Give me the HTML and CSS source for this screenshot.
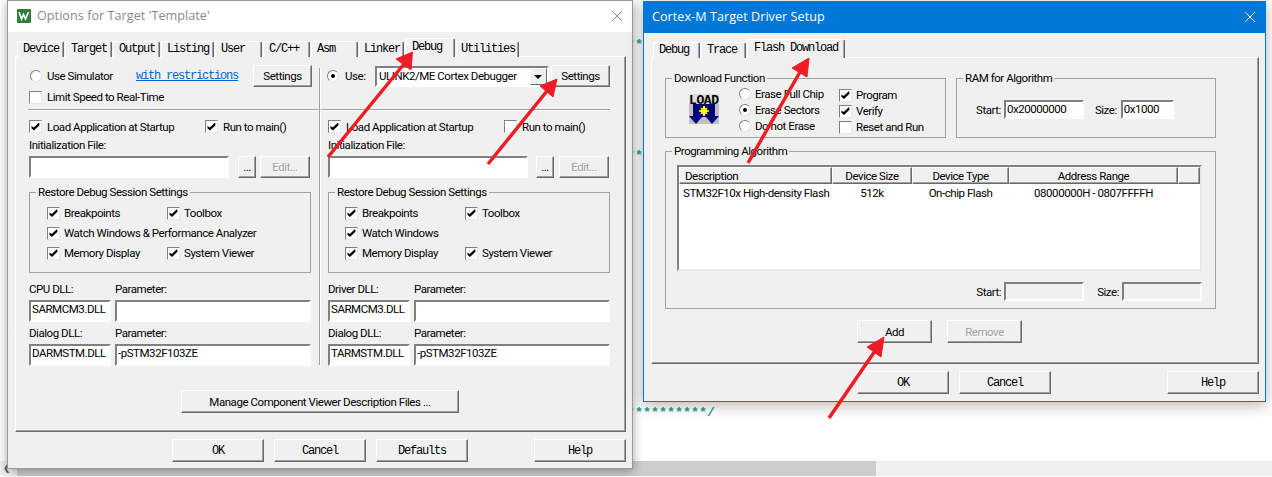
FILE: index.html
```html
<!DOCTYPE html>
<html lang="en">
<head>
<meta charset="utf-8">
<title>Options for Target</title>
<link rel="stylesheet" href="styles.css">
</head>
<body>
<div class="desktop">
  <div class="editor">
    <div class="code code-a">***</div>
    <div class="code code-b">***</div>
    <div class="code code-c">**********/</div>
  </div>
  <div class="hscroll">
    <div class="hscroll-arrow">&#10094;</div>
    <div class="hscroll-thumb"></div>
  </div>

  <section class="win win-options">
    <header class="title">
      <svg class="app-icon" viewBox="0 0 14 14" width="14" height="14"><rect width="14" height="14" rx="1" fill="#2f7d3b"/><path d="M2 3l2.5 7 2-4.500 2 4.500 3-7" fill="none" stroke="#fff" stroke-width="1.600"/></svg>
      <span class="title-text">Options for Target 'Template'</span>
      <svg class="close" viewBox="0 0 10 10" width="10" height="10"><path d="M0 0l10 10M10 0L0 10" stroke="#8a8a8a" stroke-width="1"/></svg>
    </header>
    <div class="body">
      <nav class="tabs tabs-options">
        <div class="tab">Device</div>
        <div class="tab">Target</div>
        <div class="tab">Output</div>
        <div class="tab t-listing">Listing</div>
        <div class="tab">User</div>
        <div class="tab">C/C++</div>
        <div class="tab">Asm</div>
        <div class="tab t-linker">Linker</div>
        <div class="tab active t-debug">Debug</div>
        <div class="tab t-utilities">Utilities</div>
      </nav>
      <div class="panel panel-options">
        <div class="panes">
          <div class="pane pane-left">
            <div class="row-top">
              <span class="radio"></span>
              <span class="use-sim">Use Simulator</span>
              <span class="link">with restrictions</span>
              <button class="btn btn-settings">Settings</button>
            </div>
            <label class="chk row-limit"><span class="box"></span>Limit Speed to Real-Time</label>
            <div class="rule"></div>
            <div class="row-load">
              <label class="chk load-chk"><span class="box on"></span>Load Application at Startup</label>
              <label class="chk"><span class="box on"></span>Run to main()</label>
            </div>
            <div class="lbl init-lbl">Initialization File:</div>
            <div class="row-init">
              <div class="field f-init"></div>
              <button class="btn btn-dots">...</button>
              <button class="btn btn-edit off">Edit...</button>
            </div>
            <fieldset class="group g-restore">
              <legend>Restore Debug Session Settings</legend>
              <div class="restore-grid">
                <label class="chk"><span class="box on"></span>Breakpoints</label>
                <label class="chk"><span class="box on"></span>Toolbox</label>
                <label class="chk span2"><span class="box on"></span>Watch Windows &amp; Performance Analyzer</label>
                <label class="chk"><span class="box on"></span>Memory Display</label>
                <label class="chk"><span class="box on"></span>System Viewer</label>
              </div>
            </fieldset>
            <div class="dll-grid">
              <div class="lbl">CPU DLL:</div><div class="lbl">Parameter:</div>
              <div class="field">SARMCM3.DLL</div><div class="field"></div>
              <div class="lbl">Dialog DLL:</div><div class="lbl">Parameter:</div>
              <div class="field">DARMSTM.DLL</div><div class="field">-pSTM32F103ZE</div>
            </div>
          </div>
          <div class="vline"></div>
          <div class="pane pane-right">
            <div class="row-top">
              <span class="radio on"></span>
              <span class="use-lbl">Use:</span>
              <div class="combo"><span class="combo-text">ULINK2/ME Cortex Debugger</span><span class="combo-btn"></span></div>
              <button class="btn btn-settings">Settings</button>
            </div>
            <div class="row-limit"></div>
            <div class="rule"></div>
            <div class="row-load">
              <label class="chk load-chk"><span class="box on"></span>Load Application at Startup</label>
              <label class="chk"><span class="box"></span>Run to main()</label>
            </div>
            <div class="lbl init-lbl">Initialization File:</div>
            <div class="row-init">
              <div class="field f-init"></div>
              <button class="btn btn-dots">...</button>
              <button class="btn btn-edit off">Edit...</button>
            </div>
            <fieldset class="group g-restore">
              <legend>Restore Debug Session Settings</legend>
              <div class="restore-grid">
                <label class="chk"><span class="box on"></span>Breakpoints</label>
                <label class="chk"><span class="box on"></span>Toolbox</label>
                <label class="chk span2"><span class="box on"></span>Watch Windows</label>
                <label class="chk"><span class="box on"></span>Memory Display</label>
                <label class="chk"><span class="box on"></span>System Viewer</label>
              </div>
            </fieldset>
            <div class="dll-grid">
              <div class="lbl">Driver DLL:</div><div class="lbl">Parameter:</div>
              <div class="field">SARMCM3.DLL</div><div class="field"></div>
              <div class="lbl">Dialog DLL:</div><div class="lbl">Parameter:</div>
              <div class="field">TARMSTM.DLL</div><div class="field">-pSTM32F103ZE</div>
            </div>
          </div>
        </div>
        <button class="btn btn-manage">Manage Component Viewer Description Files ...</button>
      </div>
      <div class="actions actions-options">
        <button class="btn mono btn-action">OK</button>
        <button class="btn mono btn-action">Cancel</button>
        <button class="btn mono btn-action">Defaults</button>
        <button class="btn mono btn-action push">Help</button>
      </div>
    </div>
  </section>

  <section class="win win-driver">
    <header class="title title-blue">
      <span class="title-text">Cortex-M Target Driver Setup</span>
      <svg class="close" viewBox="0 0 10 10" width="10" height="10"><path d="M0 0l10 10M10 0L0 10" stroke="#fff" stroke-width="1"/></svg>
    </header>
    <div class="body body-driver">
      <nav class="tabs tabs-driver">
        <div class="tab">Debug</div>
        <div class="tab t-trace">Trace</div>
        <div class="tab active t-flash">Flash Download</div>
      </nav>
      <div class="panel panel-driver">
        <div class="top-groups">
          <fieldset class="group g-download">
            <legend>Download Function</legend>
            <div class="download">
              <svg class="load-icon" viewBox="0 0 30 30" width="30" height="30">
                <rect width="30" height="30" fill="#c0c0c0"/>
                <rect width="30" height="10" fill="#dcdcdc"/>
                <text x="15" y="9.500" text-anchor="middle" textLength="30" class="load-text">LOAD</text>
                <path d="M4 10h22v12h4l-7 8-6-7h-4l-6 7-7-8h4z" fill="#00007f"/>
                <path d="M14.200 12h1.600l.7 2.600 2.400-1.300-1.300 2.400 2.600.7v1.200l-2.600.7 1.300 2.400-2.400-1.300-.7 2.600h-1.600l-.7-2.600-2.400 1.300 1.300-2.400-2.600-.7v-1.200l2.600-.7-1.300-2.400 2.400 1.300z" fill="#ffff00"/>
              </svg>
              <div class="radios">
                <label class="chk"><span class="radio"></span>Erase Full Chip</label>
                <label class="chk"><span class="radio on"></span>Erase Sectors</label>
                <label class="chk"><span class="radio"></span>Do not Erase</label>
              </div>
              <div class="checks">
                <label class="chk"><span class="box on"></span>Program</label>
                <label class="chk"><span class="box on"></span>Verify</label>
                <label class="chk"><span class="box"></span>Reset and Run</label>
              </div>
            </div>
          </fieldset>
          <fieldset class="group g-ram">
            <legend>RAM for Algorithm</legend>
            <div class="ram">
              <span class="lbl">Start:</span>
              <div class="field f-start">0x20000000</div>
              <span class="lbl ram-size">Size:</span>
              <div class="field f-size">0x1000</div>
            </div>
          </fieldset>
        </div>
        <fieldset class="group g-prog">
          <legend>Programming Algorithm</legend>
          <div class="list">
            <div class="list-head">
              <div class="th th-left">Description</div>
              <div class="th">Device Size</div>
              <div class="th">Device Type</div>
              <div class="th">Address Range</div>
              <div class="th"></div>
            </div>
            <div class="list-row">
              <div class="td td-left">STM32F10x High-density Flash</div>
              <div class="td">512k</div>
              <div class="td">On-chip Flash</div>
              <div class="td">08000000H - 0807FFFFH</div>
            </div>
          </div>
          <div class="range">
            <span class="lbl">Start:</span>
            <div class="field f-range"></div>
            <span class="lbl range-size">Size:</span>
            <div class="field f-range"></div>
          </div>
        </fieldset>
        <div class="add-row">
          <button class="btn btn-add">Add</button>
          <button class="btn btn-add off">Remove</button>
        </div>
      </div>
      <div class="actions actions-driver">
        <button class="btn mono btn-action">OK</button>
        <button class="btn mono btn-action">Cancel</button>
        <button class="btn mono btn-action push">Help</button>
      </div>
    </div>
  </section>

  <svg class="arrows" viewBox="0 0 1272 477" width="1272" height="477">
    <g fill="#ee1c25" stroke="#ee1c25">
      <path d="M328 157L404 64" stroke-width="3.500"/>
      <path d="M412.500 52L396 59 411 70z" stroke-width="1"/>
      <path d="M488 164L547 91" stroke-width="3.500"/>
      <path d="M557 79L540 86 553 97z" stroke-width="1"/>
      <path d="M748 163L800 72" stroke-width="3.500"/>
      <path d="M809 58L792 68 807 77z" stroke-width="1"/>
      <path d="M829 418L875 351" stroke-width="3.500"/>
      <path d="M884 337L867 347 881 357z" stroke-width="1"/>
    </g>
  </svg>
</div>
</body>
</html>
```

FILE: styles.css
```css
* { box-sizing: border-box; }
html, body { margin: 0; padding: 0; }
body { background: #fff; font: 11.5px/14px Roboto, "Liberation Sans", sans-serif; letter-spacing: -0.45px; color: #000; overflow: hidden; }

.desktop { position: relative; width: 1272px; height: 477px; overflow: hidden; }

/* background editor */
.editor { height: 461px; padding: 37px 0 0 627px; font: bold 13.33px/16px "Liberation Mono", monospace; letter-spacing: 0; color: #2c9c86; }
.code { white-space: pre; height: 16px; }
.code-b { margin-top: 95px; }
.code-c { margin-top: 241px; }
.hscroll { display: flex; height: 15px; background: #f0f0f0; }
.hscroll-arrow { width: 17px; font: 9px/15px "DejaVu Sans", sans-serif; color: #505050; padding-left: 3px; }
.hscroll-thumb { width: 859px; background: #cdcdcd; }

/* windows */
.win { position: absolute; background: #f0f0f0; display: flex; flex-direction: column; }
.win-options { left: 7px; top: 0; width: 626px; height: 469px; border: 1px solid #9a9a9a; box-shadow: 0 2px 10px rgba(0,0,0,.35); z-index: 1; }
.win-driver { left: 643px; top: 1px; width: 623px; height: 401px; border: 1px solid #0078d7; box-shadow: 0 3px 14px rgba(0,0,0,.3); z-index: 2; }

.title { height: 31px; flex: none; display: flex; align-items: center; background: #fff; padding: 0 10px 2px 9px; }
.title-text { font: 12.6px/18px "Open Sans", sans-serif; letter-spacing: .05px; color: #8a8a8a; margin-left: 6px; }
.app-icon { flex: none; }
.close { margin-left: auto; }
.title-blue { background: #0078d7; padding: 0 10px 2px 2px; }
.title-blue .title-text { color: #fff; }

.body { flex: 1; padding: 0 7px; }

/* tabs */
.tabs { display: flex; align-items: flex-end; gap: 1px; height: 25px; padding-left: 2px; position: relative; z-index: 1; margin-bottom: -1px; }
.tab { width: 47px; height: 16px; font: 12px/15px "Liberation Mono", monospace; letter-spacing: -1.2px; padding-left: 5px; background: #f0f0f0; border-top: 1px solid #fff; border-left: 1px solid #fff; border-right: 1px solid #696969; box-shadow: inset -1px 0 #a0a0a0; border-radius: 2px 2px 0 0; white-space: nowrap; }
.tab.active { height: 19px; padding: 1px 0 0 6px; line-height: 15px; }
.t-listing { width: 53px; }
.t-linker { width: 45px; padding-left: 4px; }
.t-debug { width: 50px; }
.t-utilities { width: 63px; padding-left: 4px; }
.t-trace { width: 45px; }
.t-flash { width: 98px; }

.panel { background: #f0f0f0; border: 1px solid #696969; border-top-color: #fff; border-left-color: #fff; box-shadow: inset -1px -1px #a0a0a0; }
.panel-options { width: 611px; height: 376px; }
.panel-driver { width: 608px; height: 307px; padding: 13px 0 0 13px; }

/* options panes */
.panes { display: flex; padding-top: 8px; height: 308px; }
.pane { width: 303px; padding-left: 13px; display: flex; flex-direction: column; }
.pane-left { padding-right: 7px; }
.pane-right { padding-left: 7px; padding-right: 14px; }
.vline { width: 2px; margin-top: 3px; height: 297px; border-left: 1px solid #a0a0a0; border-right: 1px solid #fff; }

.row-top { display: flex; align-items: center; height: 22px; flex: none; }
.pane-left .radio { margin-left: 1px; }
.pane-right .radio { margin-left: -1px; }
.use-sim { margin-left: 5px; width: 89px; }
.link { width: 117px; font: 12px/14px "Liberation Mono", monospace; letter-spacing: -1.2px; color: #0066cc; text-decoration: underline; }
.use-lbl { margin-left: 6px; width: 30px; }
.combo { width: 174px; height: 21px; display: flex; align-items: center; background: #fff; border: 2px solid; border-color: #808080 #fff #fff #808080; padding-left: 2px; }
.combo-text { flex: 1; white-space: nowrap; overflow: hidden; }
.combo-btn { width: 17px; height: 17px; background: #f0f0f0; border: 1px solid; border-color: #fff #696969 #696969 #fff; position: relative; flex: none; }
.combo-btn::after { content: ""; position: absolute; left: 3px; top: 6px; border: 4px solid transparent; border-top-color: #000; border-bottom: 0; }
.btn { font: inherit; letter-spacing: inherit; color: #000; background: #f0f0f0; padding: 0; border: 1px solid; border-color: #fff #696969 #696969 #fff; box-shadow: inset -1px -1px #a0a0a0; white-space: nowrap; flex: none; }
.btn.off { color: #a0a0a0; text-shadow: 1px 1px #fff; }
.btn.mono { font: 12px/14px "Liberation Mono", monospace; letter-spacing: -1.2px; }
.btn-settings { width: 59px; height: 22px; margin-left: auto; }
.row-limit { height: 12px; margin-top: 4px; flex: none; }
.rule { height: 2px; margin: 6px -7px 0 -1px; border-top: 1px solid #a0a0a0; border-bottom: 1px solid #fff; flex: none; }
.pane-right .rule { margin: 6px 0 0 -7px; }
.row-load { display: flex; height: 13px; margin-top: 9px; flex: none; }
.load-chk { width: 176px; }
.init-lbl { margin-top: 5px; height: 14px; flex: none; }
.row-init { display: flex; height: 22px; margin-top: 4px; flex: none; }
.f-init { width: 200px; height: 22px; }
.btn-dots { width: 18px; margin-left: 9px; }
.btn-edit { width: 50px; margin-left: 4px; }
.pane-right .btn-dots { margin-left: 8px; }
.pane-right .btn-edit { margin-left: 5px; }

.chk { display: flex; align-items: center; gap: 5px; white-space: nowrap; }
.box { width: 13px; height: 13px; flex: none; background: #fff; border: 1px solid; border-color: #808080 #e8e8e8 #e8e8e8 #808080; position: relative; }
.box.on::after { content: ""; position: absolute; inset: 1px; background: #000; clip-path: polygon(5% 45%, 30% 60%, 90% 5%, 95% 35%, 32% 95%, 5% 70%); }
.radio { width: 12px; height: 12px; flex: none; border-radius: 50%; background: #fff; border: 1px solid; border-color: #808080 #e4e4e4 #e4e4e4 #808080; position: relative; }
.radio.on::after { content: ""; position: absolute; left: 3px; top: 3px; width: 4px; height: 4px; border-radius: 50%; background: #000; }

.field { height: 22px; background: #fff; border: 2px solid; border-color: #808080 #fff #fff #808080; padding-left: 1px; line-height: 15px; white-space: nowrap; overflow: hidden; }

.group { margin: 0; padding: 0; border: 1px solid #a0a0a0; min-width: 0; }
.group legend { padding: 0 2px; margin-left: 6px; line-height: 14px; height: 14px; }
.g-restore { width: 282px; height: 88px; margin-top: 7px; flex: none; padding: 4px 0 0 17px; }
.g-restore legend { margin-left: -11px; }
.pane-right .g-restore { padding-left: 16px; }
.pane-right .g-restore legend { margin-left: -10px; }
.restore-grid { display: grid; grid-template-columns: 120px 120px; grid-auto-rows: 20px; align-items: center; }
.restore-grid .chk { gap: 4px; }
.span2 { grid-column: span 2; }

.dll-grid { display: grid; grid-template-columns: 82px 196px; column-gap: 4px; grid-template-rows: 14px 22px 14px 22px; row-gap: 4px; margin-top: 9px; flex: none; }

.btn-manage { display: block; width: 278px; height: 23px; margin: 25px 0 0 165px; }

.actions { display: flex; gap: 10px; }
.actions-options { padding: 7px 0 0 157px; width: 611px; }
.actions-driver { padding: 7px 0 0 206px; width: 608px; }
.btn-action { width: 92px; height: 23px; }
.push { margin-left: auto; }

/* driver panel */
.top-groups { display: flex; gap: 10px; }
.g-download { width: 281px; height: 67px; flex: none; }
.g-ram { width: 260px; height: 67px; flex: none; }
.download { display: flex; padding: 9px 0 0 23px; }
.load-icon { flex: none; margin-right: 20px; }
.load-text { font: bold 13px "Liberation Mono", monospace; fill: #000; letter-spacing: 0; }
.radios { width: 100px; display: grid; grid-auto-rows: 16px; align-items: center; margin-top: -8px; }
.radios .chk { gap: 4px; }
.checks { display: grid; grid-auto-rows: 16px; align-items: center; margin-top: -7px; }
.checks .chk { gap: 4px; }

.ram { display: flex; align-items: center; padding: 15px 0 0 19px; }
.f-start { width: 80px; height: 19px; margin-left: 3px; line-height: 15px; }
.ram-size { margin-left: 11px; }
.f-size { width: 53px; height: 19px; margin-left: 4px; line-height: 15px; }

.g-prog { width: 551px; height: 165px; margin-top: 6px; padding: 7px 0 0 11px; }
.g-prog legend { margin-left: -5px; }
.list { width: 525px; height: 106px; background: #fff; border: 2px solid; border-color: #808080 #e8e8e8 #e8e8e8 #808080; }
.list-head, .list-row { display: grid; grid-template-columns: 153px 80px 97px 169px 22px; }
.list-head { height: 17px; background: #f0f0f0; }
.th { height: 17px; text-align: center; line-height: 16px; border: 1px solid; border-color: #fff #696969 #696969 #fff; box-shadow: inset -1px -1px #a0a0a0; }
.th-left { text-align: left; padding-left: 5px; }
.list-row { height: 18px; line-height: 18px; }
.td { text-align: center; white-space: nowrap; }
.td-left { text-align: left; padding-left: 4px; }
.range { display: flex; align-items: center; justify-content: flex-end; width: 525px; margin-top: 11px; }
.f-range { width: 80px; height: 19px; background: #f0f0f0; margin-left: 3px; }
.range-size { margin-left: 13px; }

.add-row { display: flex; gap: 15px; margin: 11px 0 0 192px; }
.btn-add { width: 75px; height: 23px; }

.arrows { position: absolute; left: 0; top: 0; z-index: 3; pointer-events: none; }
```
